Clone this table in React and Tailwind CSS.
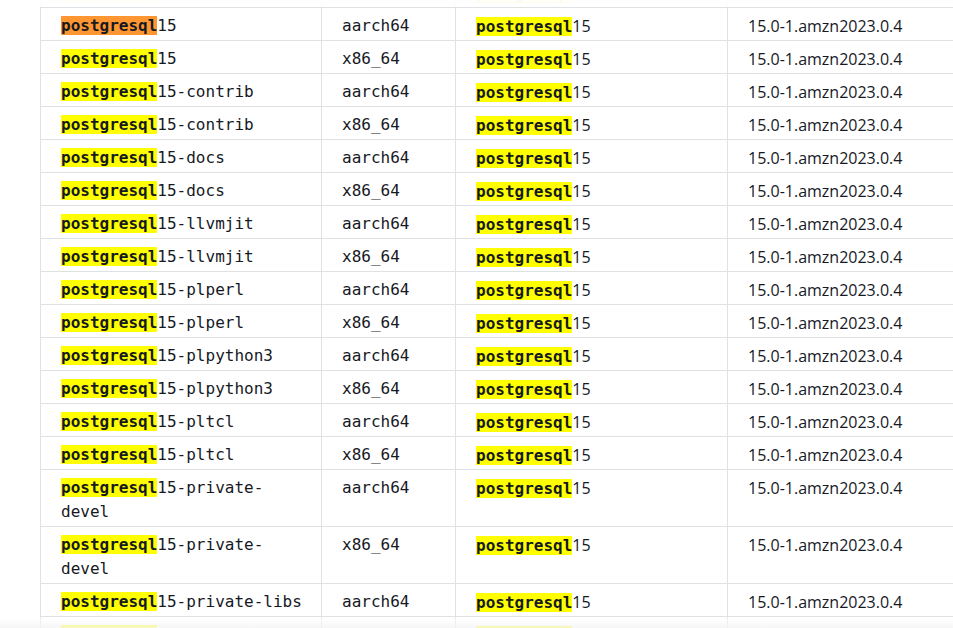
import React from 'react';

// packages shown in the search result table
const rows = [
    { name: '15', arch: 'aarch64', active: true },
    { name: '15', arch: 'x86_64' },
    { name: '15-contrib', arch: 'aarch64' },
    { name: '15-contrib', arch: 'x86_64' },
    { name: '15-docs', arch: 'aarch64' },
    { name: '15-docs', arch: 'x86_64' },
    { name: '15-llvmjit', arch: 'aarch64' },
    { name: '15-llvmjit', arch: 'x86_64' },
    { name: '15-plperl', arch: 'aarch64' },
    { name: '15-plperl', arch: 'x86_64' },
    { name: '15-plpython3', arch: 'aarch64' },
    { name: '15-plpython3', arch: 'x86_64' },
    { name: '15-pltcl', arch: 'aarch64' },
    { name: '15-pltcl', arch: 'x86_64' },
    { name: '15-private-devel', arch: 'aarch64' },
    { name: '15-private-devel', arch: 'x86_64' },
    { name: '15-private-libs', arch: 'aarch64' },
    { name: '15-private-libs', arch: 'x86_64' },
    { name: '15-server', arch: 'aarch64' },
];

const mono = "font-['DejaVu_Sans_Mono',Menlo,monospace]";
const sans = "font-['Open_Sans','Liberation_Sans',sans-serif]";
const cell = 'border-r border-b border-[#dfe2e5] pl-5 pr-4 pt-[6px] pb-[2px] leading-6 text-[16px] text-[#16191f]';

const Hit = ({ active }) => (
    <span className={`${mono} font-bold leading-[16px] ${active ? 'bg-[#ff9632]' : 'bg-[#ffff00]'}`}>postgresql</span>
);

const Row = ({ row }) => (
    <>
        <div className={`${cell} ${mono}`}>
            <Hit active={row.active} />{row.name}
        </div>
        <div className={`${cell} ${mono}`}>{row.arch}</div>
        <div className={`${cell} ${sans}`}>
            <Hit />15
        </div>
        <div className={`${cell} ${sans}`}>15.0-1.amzn2023.0.4</div>
    </>
);

const App = () => {
    return (
        <div className="relative w-[953px] h-[628px] overflow-hidden bg-white">
            <div className="pl-[40px] -mt-[25px]">
                <div className="grid grid-cols-[281px_134px_272px_300px] border-l border-[#dfe2e5]">
                    {/* row above, mostly scrolled out */}
                    <Row row={{ name: '15', arch: '' }} />
                    {rows.map((row, i) => (
                        <Row key={i} row={row} />
                    ))}
                </div>
            </div>

            {/* faded edges of the scroll area */}
            <div className="absolute top-0 left-0 right-0 h-[7px] bg-gradient-to-b from-white to-white/80" />
            <div className="absolute bottom-0 left-0 right-0 h-[10px] bg-gradient-to-b from-white/40 to-[#f4f4f4]/80" />
        </div>
    );
};

export default App;
